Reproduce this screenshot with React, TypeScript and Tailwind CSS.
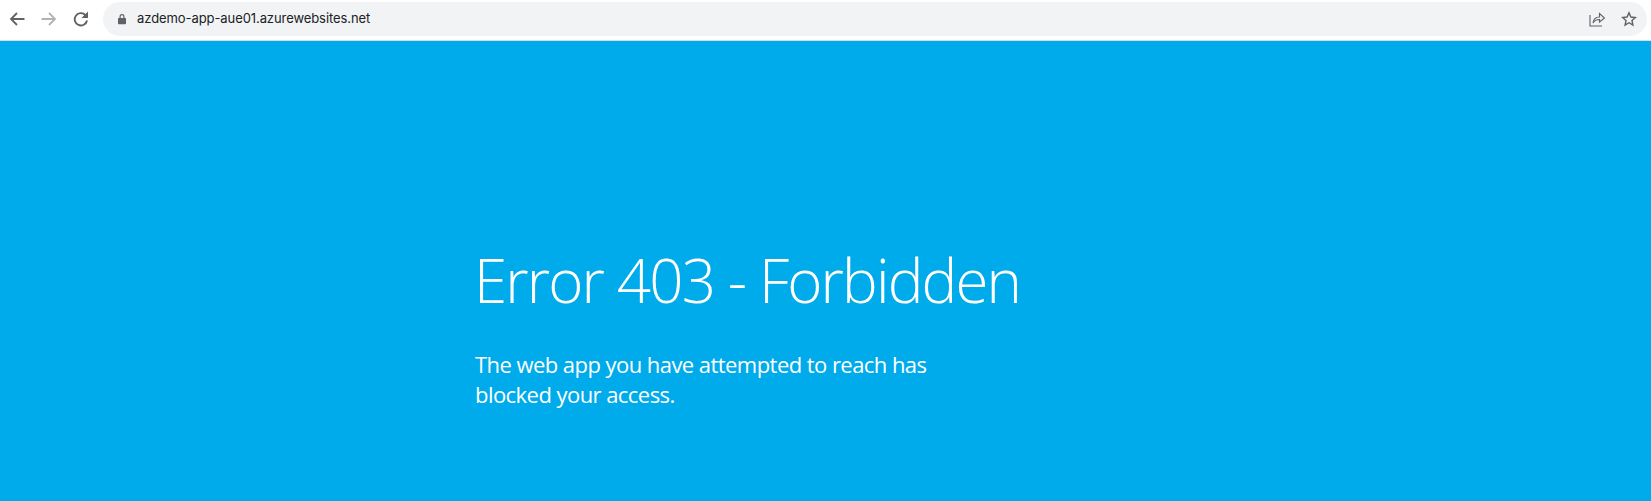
export default function App() {
  return (
    <div className="flex h-[501px] w-[1651px] flex-col overflow-hidden bg-[#00abec] font-['Open_Sans',sans-serif]">
      <header className="flex h-[41px] items-start border-b border-[#dadce0] bg-white pl-[9px] pr-1 pt-0.5">
        <div className="flex h-[34px] w-[94px] items-center gap-[16px]">
          <svg width="16" height="16" viewBox="0 0 16 16" fill="none" stroke="#5f6368" strokeWidth="1.8">
            <path d="M15.500 8H2M8 2 2 8l6 6" />
          </svg>
          <svg width="16" height="16" viewBox="0 0 16 16" fill="none" stroke="#b0b3b7" strokeWidth="1.8">
            <path d="M.5 8H14M8 2l6 6-6 6" />
          </svg>
          <svg width="16" height="16" viewBox="0 0 16 16" fill="none" stroke="#5f6368" strokeWidth="1.900">
            <path d="M14 9.500a6.200 6.200 0 1 1-1.500-5.400" />
            <path d="M15 .5v6.500H8.500Z" fill="#5f6368" stroke="none" />
          </svg>
        </div>
        <div className="flex h-[34px] flex-1 items-center rounded-full bg-[#f1f3f4] pl-[14px] pr-[10px]">
          <svg width="10" height="12" viewBox="0 0 10 12" fill="#5f6368">
            <path d="M2.500 5V3.500a2.500 2.500 0 0 1 5 0V5h.7c.5 0 .8.3.8.8v4.700c0 .5-.3.8-.8.8H1.800c-.5 0-.8-.3-.8-.8V5.800c0-.5.3-.8.8-.8Zm1.200 0h2.600V3.500a1.300 1.300 0 0 0-2.600 0Z" />
          </svg>
          <span className="ml-[10px] font-['Inter',sans-serif] text-[13px] tracking-[-0.08px] text-[#202124]">azdemo-app-aue01.azurewebsites.net</span>
          <div className="ml-auto flex items-center gap-[16px]">
            <svg width="16" height="16" viewBox="0 0 16 16" fill="none" stroke="#5f6368" strokeWidth="1.100">
              <path d="M1 4v11h12M4 12c.5-3.500 3-6 6.500-6V2.500L15.500 7l-5 4V8.500C8 8.500 5.500 9.500 4 12Z" />
            </svg>
            <svg width="16" height="16" viewBox="0 0 16 16" fill="none" stroke="#5f6368" strokeWidth="1.400">
              <path d="m8 1.800 1.900 4.200 4.500.5-3.400 3 .9 4.500L8 11.700 4.100 14l.9-4.500-3.400-3 4.500-.5Z" />
            </svg>
          </div>
        </div>
      </header>
      <main className="flex flex-1 flex-col pl-[475px] pt-[203px] text-white">
        <h1 className="-ml-px text-[60px] font-light leading-[72px] tracking-[-1.85px]">Error 403 - Forbidden</h1>
        <p className="mt-[33px] w-[470px] text-[22px] leading-[30px] tracking-[-0.55px]">
          The web app you have attempted to reach has blocked your access.
        </p>
      </main>
    </div>
  );
}
